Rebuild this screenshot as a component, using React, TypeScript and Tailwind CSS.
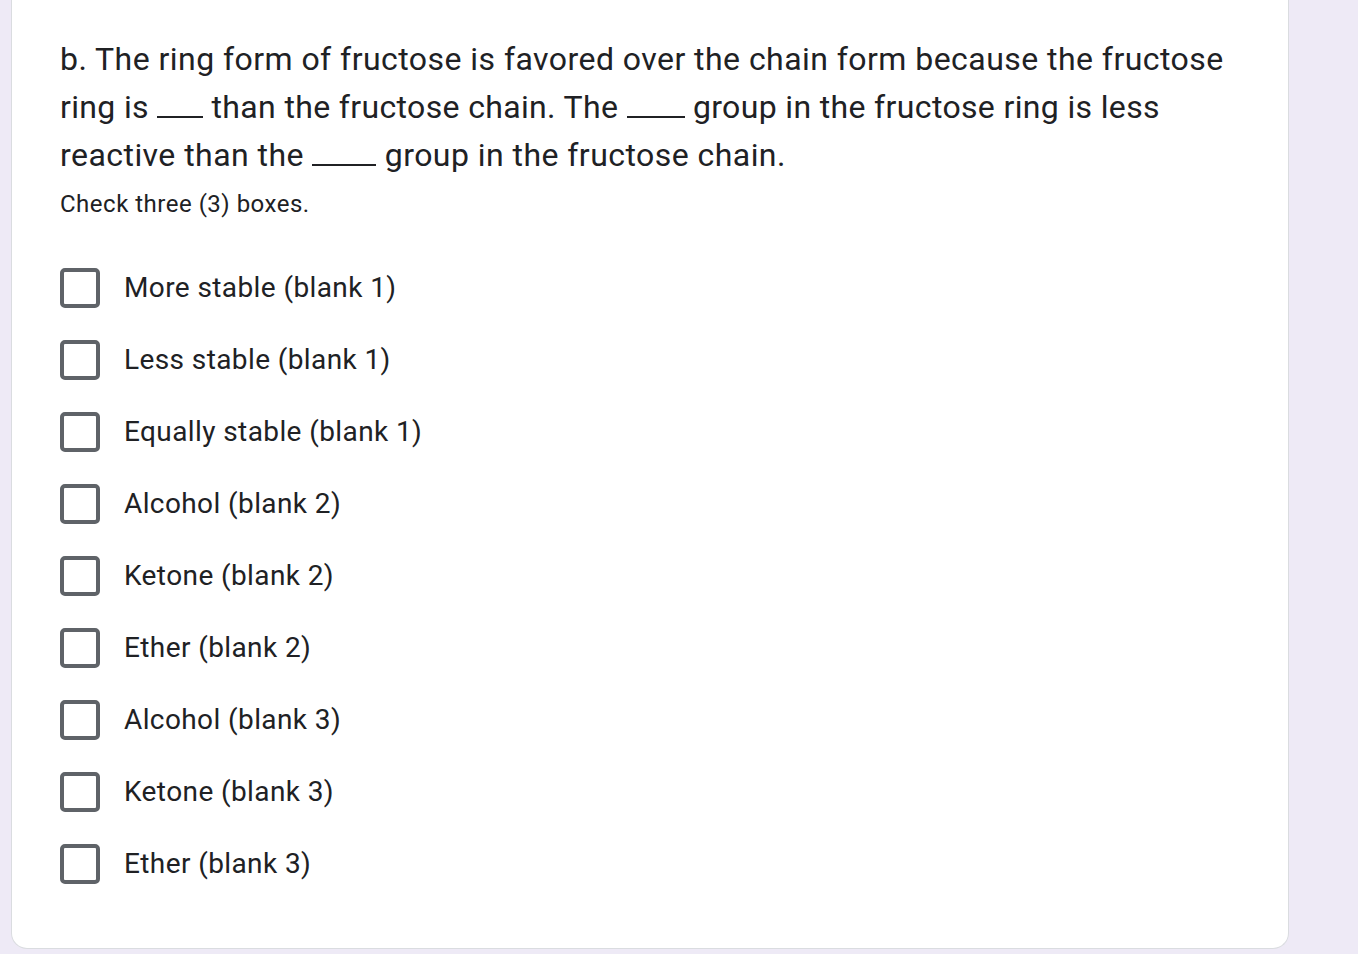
import React from "react";

const options = [
  "More stable (blank 1)",
  "Less stable (blank 1)",
  "Equally stable (blank 1)",
  "Alcohol (blank 2)",
  "Ketone (blank 2)",
  "Ether (blank 2)",
  "Alcohol (blank 3)",
  "Ketone (blank 3)",
  "Ether (blank 3)",
];

function Blank({ w }: { w: string }) {
  return <span className={`inline-block border-b-2 border-[#202124] align-baseline ${w}`} />;
}

export default function App() {
  return (
    <div
      className="w-[1358px] h-[954px] bg-[#eeeaf6] overflow-hidden pl-[11px] pr-[69px]"
      style={{ fontFamily: "Roboto, 'Open Sans', Arial, sans-serif" }}
    >
      <div className="w-[1278px] h-[949px] bg-white border-x border-b border-[#dadce0] rounded-b-[16px] pt-[35px] pl-[48px] pr-[20px] text-[#202124]">
        <div className="text-[32px] leading-[48px] tracking-[0.45px]">
          <div className="whitespace-nowrap">b. The ring form of fructose is favored over the chain form because the fructose</div>
          <div className="whitespace-nowrap tracking-[0.35px]">
            ring is <Blank w="w-[46px]" /> than the fructose chain. The <Blank w="w-[58px]" /> group in the fructose ring is less
          </div>
          <div className="whitespace-nowrap">
            reactive than the <Blank w="w-[64px]" /> group in the fructose chain.
          </div>
        </div>
        <div className="text-[24px] leading-[36px] mt-[7px] tracking-[0.5px]">Check three (3) boxes.</div>
        <div className="mt-[30px] flex flex-col">
          {options.map((o) => (
            <div key={o} className="h-[72px] flex items-center">
              <div className="w-[40px] h-[40px] border-[4px] border-[#5f6368] rounded-[5px] shrink-0" />
              <div className="ml-[24px] text-[28px] leading-[40px] tracking-[0.4px]">{o}</div>
            </div>
          ))}
        </div>
      </div>
    </div>
  );
}
